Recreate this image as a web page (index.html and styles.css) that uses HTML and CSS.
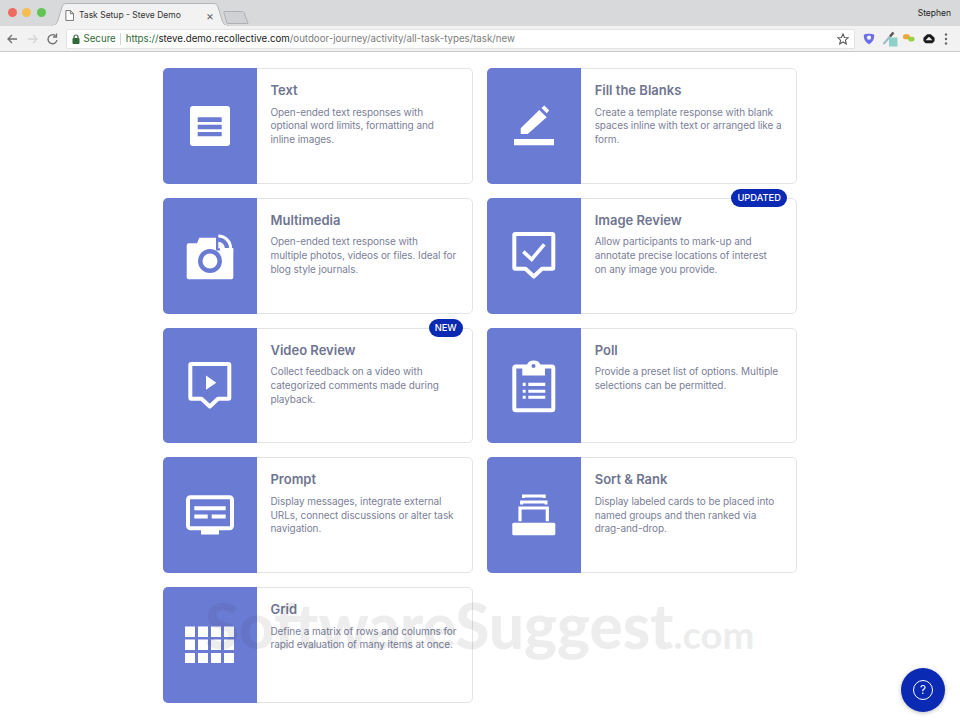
FILE: index.html
```html
<!DOCTYPE html>
<html lang="en">
<head>
    <meta charset="UTF-8">
    <title>Task Setup - Steve Demo</title>
    <link rel="stylesheet" href="styles.css">
</head>
<body>
    <!-- Browser window chrome -->
    <header class="titlebar">
        <div class="traffic">
            <span class="light red"></span>
            <span class="light yellow"></span>
            <span class="light green"></span>
        </div>
        <div class="tab">
            <svg class="tab-shape" width="176" height="23" viewBox="0 0 176 23">
                <path d="M0 22.5 C4 22.5 5 20 6 17 L10 4 C11 1.5 12 0.5 15 0.5 H161 C164 0.5 165 1.5 166 4 L170 17 C171 20 172 22.5 176 22.5" fill="#f2f2f2" stroke="#b4b5b8"/>
                <path d="M1 23 H175" stroke="#f2f2f2" stroke-width="2"/>
            </svg>
            <svg class="tab-icon" width="9" height="11" viewBox="0 0 10 12">
                <path d="M1 .5 H6 L9.5 4 V11.5 H1 Z M6 .5 V4 H9.5" fill="#fff" stroke="#6a6a6a"/>
            </svg>
            <span class="tab-title">Task Setup - Steve Demo</span>
            <span class="tab-close">×</span>
        </div>
        <svg class="new-tab" width="26" height="13" viewBox="0 0 26 13">
            <path d="M4 12.5 H25 L21 1.5 C20.700 .8 20 .5 19 .5 H2 C1 .5 .7 1 1 2 Z" fill="#d0d1d4" stroke="#b0b1b4"/>
        </svg>
        <span class="profile">Stephen</span>
    </header>

    <div class="toolbar">
        <svg class="nav" width="56" height="14" viewBox="0 0 56 14">
            <path d="M15 7 H6 M10 3 L6 7 L10 11" fill="none" stroke="#6f6f6f" stroke-width="1.300"/>
            <path d="M26 7 H35 M31 3 L35 7 L31 11" fill="none" stroke="#d4d4d4" stroke-width="1.300"/>
            <path d="M55 8 A4.500 4.500 0 1 1 53.500 3.800 M54.500 1.500 V5 H51" fill="none" stroke="#6f6f6f" stroke-width="1.300"/>
        </svg>
        <div class="omnibox">
            <svg class="lock" width="8" height="10" viewBox="0 0 8 10">
                <path d="M2 4.500 V3 A2 2 0 0 1 6 3 V4.500" fill="none" stroke="#2f6b3a" stroke-width="1.200"/>
                <rect x="0.500" y="4" width="7" height="6" rx="1" fill="#2f6b3a"/>
            </svg>
            <span class="secure">Secure</span>
            <span class="omni-divider"></span>
            <span class="url"><span class="url-scheme">https://</span><span class="url-host">steve.demo.recollective.com</span>/outdoor-journey/activity/all-task-types/task/new</span>
            <svg class="star" width="12" height="12" viewBox="0 0 12 12">
                <path d="M6 1 L7.500 4.500 L11.200 4.800 L8.400 7.200 L9.300 11 L6 9 L2.700 11 L3.600 7.200 L.8 4.800 L4.500 4.500 Z" fill="none" stroke="#5c5c5c" stroke-width="1.100"/>
            </svg>
        </div>
        <div class="extensions">
            <svg class="ext-shield" width="12" height="12" viewBox="0 0 14 14">
                <path d="M1 2 C4 .5 10 .5 13 2 C13.500 7 11 11 7 13 C3 11 .5 7 1 2 Z" fill="#6a6fe8"/>
                <circle cx="7" cy="5.500" r="2.500" fill="#f2f2f2"/>
            </svg>
            <svg class="ext-pencil" width="15" height="16" viewBox="0 0 15 16">
                <rect x="6" y="6.500" width="8.500" height="9" fill="#8fd0c8"/>
                <path d="M.5 13 L7 5.500" stroke="#9dbcc4" stroke-width="2"/>
                <path d="M7 5.500 L10.500 1.500" stroke="#555" stroke-width="2.500"/>
            </svg>
            <svg class="ext-chat" width="12" height="9" viewBox="0 0 14 10">
                <rect x="0" y="0" width="8" height="6" rx="2.500" fill="#eda73c"/>
                <rect x="6" y="3" width="7.500" height="5.500" rx="2.500" fill="#96d13f"/>
            </svg>
            <svg class="ext-cloud" width="12" height="11" viewBox="0 0 14 12">
                <path d="M5 1 H9 L13.500 5 V9 L11 11.500 H3 L.5 9 V5 Z" fill="#1b1b1b"/>
                <path d="M3 8 L7 4 L11 8 Z" fill="#eee"/>
            </svg>
            <svg class="ext-menu" width="4" height="12" viewBox="0 0 4 12">
                <circle cx="2" cy="1.500" r="1.200" fill="#666"/>
                <circle cx="2" cy="6" r="1.200" fill="#666"/>
                <circle cx="2" cy="10.500" r="1.200" fill="#666"/>
            </svg>
        </div>
    </div>

    <!-- Task type cards -->
    <main class="task-grid">
        <a class="task-card">
            <div class="task-icon">
                <svg width="60" height="60" viewBox="0 0 60 60">
                    <rect x="10" y="10" width="40" height="40" rx="3" fill="#fff"/>
                    <path d="M17.700 21.300 H41.700 V26 H17.700 Z M17.700 28.700 H41.700 V33.300 H17.700 Z M17.700 36 H41.700 V40.300 H17.700 Z" fill="#6a7bd4"/>
                </svg>
            </div>
            <div class="task-body">
                <h3>Text</h3>
                <p>Open-ended text responses with optional word limits, formatting and inline images.</p>
            </div>
        </a>

        <a class="task-card">
            <div class="task-icon">
                <svg width="60" height="60" viewBox="0 0 60 60">
                    <path d="M10 43 H50 V49.300 H10 Z" fill="#fff"/>
                    <path d="M16.700 38 V32.300 L35.300 14 L42.700 21.300 L23.700 38 Z" fill="#fff"/>
                    <path d="M37.500 12 L40.300 9.500 L45.200 14.500 L42.700 17.300 Z" fill="#fff"/>
                </svg>
            </div>
            <div class="task-body">
                <h3>Fill the Blanks</h3>
                <p>Create a template response with blank spaces inline with text or arranged like a form.</p>
            </div>
        </a>

        <a class="task-card">
            <div class="task-icon">
                <svg width="60" height="60" viewBox="0 0 60 60">
                    <path d="M8.700 17.300 H17 L19.300 11.700 H38.300 V22.300 H53.300 V51.300 A2 2 0 0 1 51.300 53.300 H8.700 A2 2 0 0 1 6.700 51.300 V19.300 A2 2 0 0 1 8.700 17.300 Z" fill="#fff"/>
                    <path d="M36 9 H54 V24.500 H36 Z" fill="#6a7bd4"/>
                    <path d="M38.300 22.300 V15.800 A6.500 6.500 0 0 1 44.800 22.300 Z" fill="#fff"/>
                    <path d="M38.300 10 A12.300 12.300 0 0 1 50.600 22.300 M38.300 8.500" fill="none" stroke="#fff" stroke-width="3"/>
                    <path d="M40 22 H53.300 V26 H40 Z" fill="#fff"/>
                    <circle cx="30" cy="35" r="12" fill="#6a7bd4"/>
                    <circle cx="30" cy="35" r="7.500" fill="#fff"/>
                </svg>
            </div>
            <div class="task-body">
                <h3>Multimedia</h3>
                <p>Open-ended text response with<br>multiple photos, videos or files. Ideal for blog style journals.</p>
            </div>
        </a>

        <a class="task-card">
            <span class="badge">UPDATED</span>
            <div class="task-icon">
                <svg width="60" height="60" viewBox="0 0 60 60">
                    <path d="M11.300 8 H48.300 A1 1 0 0 1 49.300 9 V41.700 A1 1 0 0 1 48.300 42.700 H38 L29.800 50.500 L21.500 42.700 H11.300 A1 1 0 0 1 10.300 41.700 V9 A1 1 0 0 1 11.300 8 Z" fill="none" stroke="#fff" stroke-width="4" stroke-linejoin="round"/>
                    <path d="M19.300 25.700 L27.700 33.300 L40.300 18.300" fill="none" stroke="#fff" stroke-width="3.600"/>
                </svg>
            </div>
            <div class="task-body">
                <h3>Image Review</h3>
                <p>Allow participants to mark-up and annotate precise locations of interest<br>on any image you provide.</p>
            </div>
        </a>

        <a class="task-card">
            <span class="badge">NEW</span>
            <div class="task-icon">
                <svg width="60" height="60" viewBox="0 0 60 60">
                    <path d="M11.300 8 H48.300 A1 1 0 0 1 49.300 9 V41.700 A1 1 0 0 1 48.300 42.700 H38 L29.800 50.500 L21.500 42.700 H11.300 A1 1 0 0 1 10.300 41.700 V9 A1 1 0 0 1 11.300 8 Z" fill="none" stroke="#fff" stroke-width="4" stroke-linejoin="round"/>
                    <path d="M26 19.500 V33.800 L36.300 26.800 Z" fill="#fff"/>
                </svg>
            </div>
            <div class="task-body">
                <h3>Video Review</h3>
                <p>Collect feedback on a video with categorized comments made during playback.</p>
            </div>
        </a>

        <a class="task-card">
            <div class="task-icon">
                <svg width="60" height="60" viewBox="0 0 60 60">
                    <rect x="10.300" y="10.500" width="39" height="43.700" rx="1.500" fill="none" stroke="#fff" stroke-width="4"/>
                    <path d="M18.300 9 H23 A7 6 0 0 1 36.500 9 H41 V19.500 H18.300 Z" fill="#fff"/>
                    <circle cx="29.500" cy="10" r="2" fill="#6a7bd4"/>
                    <path d="M18.700 26.800 H21.700 V30 H18.700 Z M18.700 33.800 H21.700 V36.800 H18.700 Z M18.700 39.800 H21.700 V42.800 H18.700 Z M24.300 26.800 H41.300 V30 H24.300 Z M24.300 33.800 H41.300 V36.800 H24.300 Z M24.300 39.800 H41.300 V42.800 H24.300 Z" fill="#fff"/>
                </svg>
            </div>
            <div class="task-body">
                <h3>Poll</h3>
                <p>Provide a preset list of options. Multiple selections can be permitted.</p>
            </div>
        </a>

        <a class="task-card">
            <div class="task-icon">
                <svg width="60" height="60" viewBox="0 0 60 60">
                    <rect x="8" y="12.200" width="44" height="31" rx="2.500" fill="none" stroke="#fff" stroke-width="4"/>
                    <path d="M21 45 H39 V49.500 H21 Z M14.300 21.200 H45.700 V25.200 H14.300 Z M14.300 29.500 H27.700 V33.500 H14.300 Z M31.700 29.500 H45.700 V33.500 H31.700 Z" fill="#fff"/>
                </svg>
            </div>
            <div class="task-body">
                <h3>Prompt</h3>
                <p>Display messages, integrate external URLs, connect discussions or alter task navigation.</p>
            </div>
        </a>

        <a class="task-card">
            <div class="task-icon">
                <svg width="60" height="60" viewBox="0 0 60 60">
                    <rect x="8.300" y="37.800" width="43" height="12.400" rx="1.500" fill="#fff"/>
                    <path d="M16 36.200 V23 H43.300 V36.200" fill="none" stroke="#fff" stroke-width="3.200"/>
                    <path d="M17.600 19.500 V17 H42 V19.500" fill="none" stroke="#fff" stroke-width="3"/>
                    <path d="M19.500 13 V11 H40.200 V13" fill="none" stroke="#fff" stroke-width="3"/>
                </svg>
            </div>
            <div class="task-body">
                <h3>Sort &amp; Rank</h3>
                <p>Display labeled cards to be placed into named groups and then ranked via drag-and-drop.</p>
            </div>
        </a>

        <a class="task-card">
            <div class="task-icon">
                <svg width="60" height="60" viewBox="0 0 60 60">
                    <path d="M5 11.600 H15 V22 H5 Z M18 11.600 H28 V22 H18 Z M31 11.600 H41 V22 H31 Z M44 11.600 H54 V22 H44 Z M5 24.600 H15 V35 H5 Z M18 24.600 H28 V35 H18 Z M31 24.600 H41 V35 H31 Z M44 24.600 H54 V35 H44 Z M5 38 H15 V48 H5 Z M18 38 H28 V48 H18 Z M31 38 H41 V48 H31 Z M44 38 H54 V48 H44 Z" fill="#fff"/>
                </svg>
            </div>
            <div class="task-body">
                <h3>Grid</h3>
                <p>Define a matrix of rows and columns for rapid evaluation of many items at once.</p>
            </div>
        </a>
    </main>

    <div class="watermark">SoftwareSuggest<span class="watermark-tld">.com</span></div>

    <button class="help-button">
        <span class="help-ring">?</span>
    </button>
</body>
</html>
```

FILE: styles.css
```css
html, body {
    height: 100%;
}

body {
    margin: 0;
    overflow: hidden;
    background-color: #fff;
    font-family: 'Inter', 'Liberation Sans', sans-serif;
    color: #6f7590;
}

/* Browser chrome */
.titlebar {
    display: flex;
    align-items: flex-end;
    height: 26px;
    background-color: #d8d9db;
    position: relative;
}

.traffic {
    display: flex;
    gap: 5.600px;
    align-self: flex-start;
    padding: 8px 0 0 7.500px;
    width: 50px;
    box-sizing: border-box;
}

.light {
    width: 9px;
    height: 9px;
    border-radius: 50%;
}

.light.red { background-color: #ee6a5f; }
.light.yellow { background-color: #f5bd4f; }
.light.green { background-color: #61c454; }

.tab {
    display: flex;
    align-items: center;
    position: relative;
    width: 176px;
    height: 22px;
    margin-left: 2px;
    padding-left: 13px;
    box-sizing: border-box;
    font-size: 8.500px;
    color: #333;
}

.tab-shape {
    position: absolute;
    left: 0;
    top: -1px;
}

.tab-icon {
    position: relative;
    margin-right: 5px;
}

.tab-title {
    position: relative;
    width: 127px;
    white-space: nowrap;
}

.tab-close {
    position: relative;
    font-size: 12px;
    color: #666;
}

.new-tab {
    margin: 0 0 2px -5px;
}

.profile {
    margin-left: auto;
    align-self: center;
    padding-right: 9px;
    font-size: 8.500px;
    color: #222;
}

.toolbar {
    display: flex;
    align-items: center;
    height: 26px;
    box-sizing: border-box;
    background-color: #f2f2f2;
    border-bottom: 1px solid #c9c9c9;
    padding-left: 2px;
}

.nav {
    margin-right: 8px;
}

.omnibox {
    display: flex;
    align-items: center;
    width: 789px;
    height: 20px;
    box-sizing: border-box;
    background-color: #fff;
    border: 1px solid #e3e3e3;
    border-radius: 2px;
    padding: 0 5px 0 4.500px;
    font-size: 9.700px;
}

.lock {
    margin-right: 4px;
}

.secure {
    color: #2f6b3a;
}

.omni-divider {
    width: 1px;
    height: 12px;
    margin: 0 4.500px;
    background-color: #d4d4d4;
}

.url {
    color: #7c7c7c;
    white-space: nowrap;
}

.url-scheme {
    color: #2f6b3a;
}

.url-host {
    color: #222;
}

.star {
    margin-left: auto;
}

.extensions {
    display: flex;
    align-items: center;
    padding-left: 8px;
}

.ext-pencil { margin: 0 5px 0 8px; }
.ext-cloud { margin: 0 9px 0 8px; }

/* Card grid */
.task-grid {
    display: grid;
    grid-template-columns: 310px 310px;
    grid-auto-rows: 115.750px;
    column-gap: 14.200px;
    row-gap: 14px;
    padding: 16.200px 0 0 162.700px;
}

.task-card {
    display: flex;
    position: relative;
    box-sizing: border-box;
    background-color: #fff;
    border: 1px solid #e3e4e8;
    border-radius: 5px;
}

.task-icon {
    display: flex;
    align-items: center;
    justify-content: center;
    flex: none;
    box-sizing: border-box;
    width: 94px;
    padding-left: 1px;
    margin: -1px 0 -1px -1px;
    background-color: #6a7bd4;
    border-radius: 5px 0 0 5px;
}

.task-body {
    padding: 13px 13.200px 0 13.800px;
}

.task-body h3 {
    margin: 0 0 6.500px;
    font-size: 13px;
    line-height: 17px;
    font-weight: 600;
    color: #6f7590;
}

.task-body p {
    margin: 0;
    font-size: 10px;
    letter-spacing: -0.080px;
    line-height: 13.700px;
    color: #7b8098;
}

.badge {
    position: absolute;
    top: -9.500px;
    right: 9px;
    height: 17.500px;
    padding: 0 6px;
    border-radius: 9px;
    background-color: #0b2ab3;
    color: #fff;
    font-size: 9.300px;
    font-weight: 500;
    line-height: 17.500px;
}

/* Overlays */
.watermark {
    position: absolute;
    left: 205px;
    top: 590px;
    font-family: 'Lato', 'Liberation Sans', sans-serif;
    font-size: 62px;
    font-weight: 900;
    line-height: 70px;
    color: rgba(60, 60, 70, 0.09);
    white-space: nowrap;
    pointer-events: none;
}

.watermark-tld {
    font-size: 38px;
}

.help-button {
    position: fixed;
    right: 15px;
    bottom: 14px;
    display: flex;
    align-items: center;
    justify-content: center;
    width: 44px;
    height: 44px;
    padding: 0;
    border: 0;
    border-radius: 50%;
    background-color: #0b2ab3;
    box-shadow: 0 1px 4px rgba(0, 0, 0, 0.25);
}

.help-ring {
    display: block;
    width: 18px;
    height: 18px;
    border: 1.500px solid #fff;
    border-radius: 50%;
    color: #fff;
    font-family: 'Inter', sans-serif;
    font-size: 12px;
    line-height: 18px;
    text-align: center;
}
```
